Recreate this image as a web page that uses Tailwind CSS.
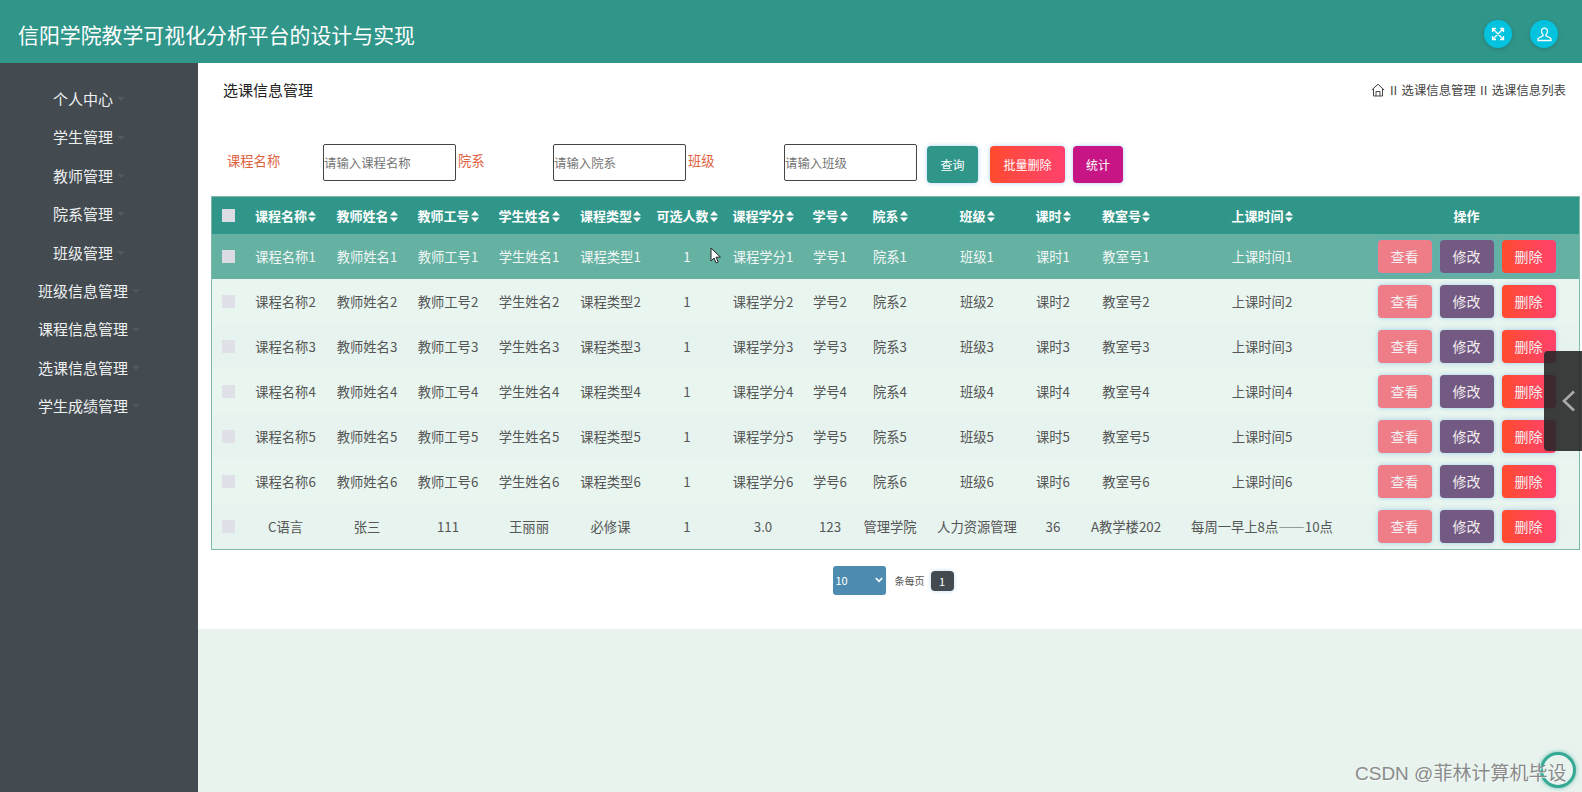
<!DOCTYPE html>
<html lang="zh">
<head>
<meta charset="utf-8">
<title>信阳学院教学可视化分析平台</title>
<script src="https://cdn.jsdelivr.net/npm/@tailwindcss/browser@4"></script>
</head>
<body class="bg-[#e8f3ee]">
<div class="relative w-[1582px] h-[792px] overflow-hidden flex flex-col bg-[#e8f3ee] font-['Noto_Sans_CJK_SC','Noto_Sans',sans-serif]">
  <header class="h-[63px] shrink-0 bg-[#31968a] flex items-center pl-[18px] pr-[24px]">
    <h1 class="text-[20.900px] leading-[28px] text-white mt-[9px] mb-0 flex-1 -translate-y-[2px]">信阳学院教学可视化分析平台的设计与实现</h1>
    <div class="flex gap-[18px] mt-[5px]">
      <button class="w-[28px] h-[28px] rounded-full bg-[#03c3de] shadow-[0_1px_4px_rgba(0,0,0,0.2)] flex items-center justify-center">
        <svg class="w-[14px] h-[14px]" viewBox="0 0 14 14" fill="none" stroke="#fff" stroke-width="1.3"><path d="M2 2l10 10M12 2L2 12M1.5 5V1.5H5M9 1.5h3.5V5M12.5 9v3.5H9M5 12.5H1.5V9"/></svg>
      </button>
      <button class="w-[28px] h-[28px] rounded-full bg-[#03c3de] shadow-[0_1px_4px_rgba(0,0,0,0.2)] flex items-center justify-center">
        <svg class="w-[15px] h-[15px]" viewBox="0 0 15 15" fill="none" stroke="#fff" stroke-width="1.3"><path d="M7.5 1.2c-2 0-3 1.4-3 3.1 0 1.500.7 2.700 1.500 3.400v1.100L1.800 11c-.6.300-.8.800-.8 1.300V13.500h13v-1.200c0-.5-.2-1-.8-1.300L9 8.800V7.700c.8-.7 1.500-1.900 1.500-3.400 0-1.700-1-3.100-3-3.100z"/></svg>
      </button>
    </div>
  </header>
  <div class="flex flex-1 min-h-0">
    <aside class="w-[198px] shrink-0 bg-[#434a50] pt-[17px] pr-[20px] text-[15px] leading-[38.4px] text-[#eef0f0]">
      <div class="flex items-center justify-center gap-[4px]"><span>个人中心</span><i class="w-0 h-0 border-x-[4px] border-x-transparent border-t-[4px] border-t-[#52585e]"></i></div>
      <div class="flex items-center justify-center gap-[4px]"><span>学生管理</span><i class="w-0 h-0 border-x-[4px] border-x-transparent border-t-[4px] border-t-[#52585e]"></i></div>
      <div class="flex items-center justify-center gap-[4px]"><span>教师管理</span><i class="w-0 h-0 border-x-[4px] border-x-transparent border-t-[4px] border-t-[#52585e]"></i></div>
      <div class="flex items-center justify-center gap-[4px]"><span>院系管理</span><i class="w-0 h-0 border-x-[4px] border-x-transparent border-t-[4px] border-t-[#52585e]"></i></div>
      <div class="flex items-center justify-center gap-[4px]"><span>班级管理</span><i class="w-0 h-0 border-x-[4px] border-x-transparent border-t-[4px] border-t-[#52585e]"></i></div>
      <div class="flex items-center justify-center gap-[4px]"><span>班级信息管理</span><i class="w-0 h-0 border-x-[4px] border-x-transparent border-t-[4px] border-t-[#52585e]"></i></div>
      <div class="flex items-center justify-center gap-[4px]"><span>课程信息管理</span><i class="w-0 h-0 border-x-[4px] border-x-transparent border-t-[4px] border-t-[#52585e]"></i></div>
      <div class="flex items-center justify-center gap-[4px]"><span>选课信息管理</span><i class="w-0 h-0 border-x-[4px] border-x-transparent border-t-[4px] border-t-[#52585e]"></i></div>
      <div class="flex items-center justify-center gap-[4px]"><span>学生成绩管理</span><i class="w-0 h-0 border-x-[4px] border-x-transparent border-t-[4px] border-t-[#52585e]"></i></div>
    </aside>
    <main class="flex-1 min-w-0">
      <div class="bg-white h-[566px] pt-[14px]">
        <div class="flex items-center justify-between h-[26px] pl-[25px] pr-[16px]">
          <span class="text-[15px] text-[#222]">选课信息管理</span>
          <div class="flex items-center text-[12.400px] text-[#444] [word-spacing:1.5px]">
            <svg class="w-[14px] h-[14px] mr-[5px]" viewBox="0 0 14 14" fill="none" stroke="#444" stroke-width="1"><path d="M.8 7L7 1.200 13.200 7M2.500 5.800V13h9V5.800M5 13V8.500h4V13"/></svg>
            <span>II 选课信息管理 II 选课信息列表</span>
          </div>
        </div>
        <form class="flex items-start h-[52px] mt-[41px] pl-[29px]">
          <label class="w-[96px] h-[36px] text-[13.300px] leading-[33px] text-[#e0623f]">课程名称</label>
          <input class="w-[133px] h-[37px] border border-[#444] rounded-[2px] bg-white px-0 text-[12.400px] placeholder:text-[#757575]" placeholder="请输入课程名称">
          <label class="w-[95px] h-[36px] ml-[2px] text-[13.300px] leading-[33px] text-[#e0623f]">院系</label>
          <input class="w-[133px] h-[37px] border border-[#444] rounded-[2px] bg-white px-0 text-[12.400px] placeholder:text-[#757575]" placeholder="请输入院系">
          <label class="w-[96px] h-[36px] ml-[2px] text-[13.300px] leading-[33px] text-[#e0623f]">班级</label>
          <input class="w-[133px] h-[37px] border border-[#444] rounded-[2px] bg-white px-0 text-[12.400px] placeholder:text-[#757575]" placeholder="请输入班级">
          <button type="button" class="w-[51px] h-[37px] ml-[10px] mt-[2px] rounded-[4px] bg-[#31968a] text-white text-[12px] shadow-[0_0_4px_rgba(90,170,230,0.5)]">查询</button>
          <button type="button" class="w-[75px] h-[37px] ml-[12px] mt-[2px] rounded-[4px] bg-gradient-to-r from-[#ff4b2b] to-[#ff416c] text-white text-[12px] shadow-[0_0_4px_rgba(90,170,230,0.5)]">批量删除</button>
          <button type="button" class="w-[50px] h-[37px] ml-[8px] mt-[2px] rounded-[4px] bg-[#c71585] text-white text-[12px] shadow-[0_0_4px_rgba(90,170,230,0.5)]">统计</button>
        </form>
        <div class="ml-[13px] w-[1369px] border border-[#7fb9ae]">
          <table class="table-fixed w-[1367px] border-collapse text-[13.300px] [&_td]:p-0 [&_td]:text-center [&_td]:whitespace-nowrap [&_th]:p-0 [&_th]:whitespace-nowrap [&_tbody_tr]:h-[45px] [&_tbody_tr:nth-child(even)]:bg-[#e9f6f0] [&_tbody_tr:nth-child(odd)]:bg-[#e6f3ee] text-[#555]">
            <colgroup>
              <col class="w-[33px]"><col class="w-[81px]"><col class="w-[82px]"><col class="w-[80px]"><col class="w-[82px]"><col class="w-[81px]"><col class="w-[72px]"><col class="w-[80px]"><col class="w-[54px]"><col class="w-[66px]"><col class="w-[108px]"><col class="w-[44px]"><col class="w-[102px]"><col class="w-[170px]"><col class="w-[232px]">
            </colgroup>
            <thead class="bg-[#31968a] text-white">
              <tr class="h-[37px] text-[13px] [&_th>svg]:inline-block [&_th>svg]:w-[8px] [&_th>svg]:h-[11px] [&_th>svg]:ml-[1px] [&_th>svg]:align-[-1px]">
                <th><span class="block w-[13px] h-[13px] bg-[#dcdde4] ml-[10px]"></span></th>
                <th>课程名称<svg viewBox="0 0 8 11" fill="#fff"><path d="M4 0l4 4.500H0zM0 6.500h8L4 11z"/></svg></th>
                <th>教师姓名<svg viewBox="0 0 8 11" fill="#fff"><path d="M4 0l4 4.500H0zM0 6.500h8L4 11z"/></svg></th>
                <th>教师工号<svg viewBox="0 0 8 11" fill="#fff"><path d="M4 0l4 4.500H0zM0 6.500h8L4 11z"/></svg></th>
                <th>学生姓名<svg viewBox="0 0 8 11" fill="#fff"><path d="M4 0l4 4.500H0zM0 6.500h8L4 11z"/></svg></th>
                <th>课程类型<svg viewBox="0 0 8 11" fill="#fff"><path d="M4 0l4 4.500H0zM0 6.500h8L4 11z"/></svg></th>
                <th>可选人数<svg viewBox="0 0 8 11" fill="#fff"><path d="M4 0l4 4.500H0zM0 6.500h8L4 11z"/></svg></th>
                <th>课程学分<svg viewBox="0 0 8 11" fill="#fff"><path d="M4 0l4 4.500H0zM0 6.500h8L4 11z"/></svg></th>
                <th>学号<svg viewBox="0 0 8 11" fill="#fff"><path d="M4 0l4 4.500H0zM0 6.500h8L4 11z"/></svg></th>
                <th>院系<svg viewBox="0 0 8 11" fill="#fff"><path d="M4 0l4 4.500H0zM0 6.500h8L4 11z"/></svg></th>
                <th>班级<svg viewBox="0 0 8 11" fill="#fff"><path d="M4 0l4 4.500H0zM0 6.500h8L4 11z"/></svg></th>
                <th>课时<svg viewBox="0 0 8 11" fill="#fff"><path d="M4 0l4 4.500H0zM0 6.500h8L4 11z"/></svg></th>
                <th>教室号<svg viewBox="0 0 8 11" fill="#fff"><path d="M4 0l4 4.500H0zM0 6.500h8L4 11z"/></svg></th>
                <th>上课时间<svg viewBox="0 0 8 11" fill="#fff"><path d="M4 0l4 4.500H0zM0 6.500h8L4 11z"/></svg></th>
                <th class="!pl-[7px]">操作</th>
              </tr>
            </thead>
            <tbody class="[&_.acts]:flex [&_.acts]:justify-center [&_.acts]:gap-[8px] [&_.acts]:pl-[7px] [&_.acts>button]:w-[54px] [&_.acts>button]:h-[33px] [&_.acts>button]:rounded-[4px] [&_.acts>button]:text-[14px] [&_.acts>button]:text-[#f4eef0] [&_.acts>button]:shadow-[0_0_4px_rgba(90,170,230,0.5)] [&_.ck]:block [&_.ck]:w-[13px] [&_.ck]:h-[13px] [&_.ck]:ml-[10px] [&_.ck]:bg-[#dfe0e8]">
              <tr class="!bg-[#65b2a3] !text-[#f2f7f6]"><td><span class="ck !bg-[#dcdde4]"></span></td><td>课程名称1</td><td>教师姓名1</td><td>教师工号1</td><td>学生姓名1</td><td>课程类型1</td><td>1</td><td>课程学分1</td><td>学号1</td><td>院系1</td><td>班级1</td><td>课时1</td><td>教室号1</td><td>上课时间1</td><td><div class="acts"><button class="bg-[#ee7d88]">查看</button><button class="bg-[#735a82]">修改</button><button class="bg-gradient-to-r from-[#ff4b2b] to-[#ff416c]">删除</button></div></td></tr>
              <tr><td><span class="ck"></span></td><td>课程名称2</td><td>教师姓名2</td><td>教师工号2</td><td>学生姓名2</td><td>课程类型2</td><td>1</td><td>课程学分2</td><td>学号2</td><td>院系2</td><td>班级2</td><td>课时2</td><td>教室号2</td><td>上课时间2</td><td><div class="acts"><button class="bg-[#ee7d88]">查看</button><button class="bg-[#735a82]">修改</button><button class="bg-gradient-to-r from-[#ff4b2b] to-[#ff416c]">删除</button></div></td></tr>
              <tr><td><span class="ck"></span></td><td>课程名称3</td><td>教师姓名3</td><td>教师工号3</td><td>学生姓名3</td><td>课程类型3</td><td>1</td><td>课程学分3</td><td>学号3</td><td>院系3</td><td>班级3</td><td>课时3</td><td>教室号3</td><td>上课时间3</td><td><div class="acts"><button class="bg-[#ee7d88]">查看</button><button class="bg-[#735a82]">修改</button><button class="bg-gradient-to-r from-[#ff4b2b] to-[#ff416c]">删除</button></div></td></tr>
              <tr><td><span class="ck"></span></td><td>课程名称4</td><td>教师姓名4</td><td>教师工号4</td><td>学生姓名4</td><td>课程类型4</td><td>1</td><td>课程学分4</td><td>学号4</td><td>院系4</td><td>班级4</td><td>课时4</td><td>教室号4</td><td>上课时间4</td><td><div class="acts"><button class="bg-[#ee7d88]">查看</button><button class="bg-[#735a82]">修改</button><button class="bg-gradient-to-r from-[#ff4b2b] to-[#ff416c]">删除</button></div></td></tr>
              <tr><td><span class="ck"></span></td><td>课程名称5</td><td>教师姓名5</td><td>教师工号5</td><td>学生姓名5</td><td>课程类型5</td><td>1</td><td>课程学分5</td><td>学号5</td><td>院系5</td><td>班级5</td><td>课时5</td><td>教室号5</td><td>上课时间5</td><td><div class="acts"><button class="bg-[#ee7d88]">查看</button><button class="bg-[#735a82]">修改</button><button class="bg-gradient-to-r from-[#ff4b2b] to-[#ff416c]">删除</button></div></td></tr>
              <tr><td><span class="ck"></span></td><td>课程名称6</td><td>教师姓名6</td><td>教师工号6</td><td>学生姓名6</td><td>课程类型6</td><td>1</td><td>课程学分6</td><td>学号6</td><td>院系6</td><td>班级6</td><td>课时6</td><td>教室号6</td><td>上课时间6</td><td><div class="acts"><button class="bg-[#ee7d88]">查看</button><button class="bg-[#735a82]">修改</button><button class="bg-gradient-to-r from-[#ff4b2b] to-[#ff416c]">删除</button></div></td></tr>
              <tr><td><span class="ck"></span></td><td>C语言</td><td>张三</td><td>111</td><td>王丽丽</td><td>必修课</td><td>1</td><td>3.0</td><td>123</td><td>管理学院</td><td>人力资源管理</td><td>36</td><td>A教学楼202</td><td>每周一早上8点——10点</td><td><div class="acts"><button class="bg-[#ee7d88]">查看</button><button class="bg-[#735a82]">修改</button><button class="bg-gradient-to-r from-[#ff4b2b] to-[#ff416c]">删除</button></div></td></tr>
            </tbody>
          </table>
        </div>
        <div class="flex items-center justify-center h-[29px] mt-[16px]">
          <div class="relative w-[53px] h-[29px] ml-[6px]">
            <select class="appearance-none w-full h-full rounded-[3px] bg-[#4d8cb0] text-white text-[11px] pl-[3px]"><option>10</option></select>
            <svg class="absolute right-[3px] top-[11px] w-[8px] h-[6px]" viewBox="0 0 8 6" fill="none" stroke="#fff" stroke-width="1.6"><path d="M.8 1l3.200 3.400L7.200 1"/></svg>
          </div>
          <span class="ml-[9px] text-[10px] text-[#555]">条每页</span>
          <span class="ml-[6px] w-[23px] h-[20px] rounded-[4px] bg-[#434a50] text-white text-[11px] leading-[20px] text-center shadow-[0_0_4px_rgba(90,170,230,0.4)]">1</span>
        </div>
      </div>
    </main>
  </div>

  <div class="absolute right-0 top-[351px] w-[38px] h-[100px] rounded-l-[4px] bg-[#282828]/90 flex items-center justify-end pr-[6px]">
    <svg class="w-[14px] h-[22px]" viewBox="0 0 14 22" fill="none" stroke="#a9a9a9" stroke-width="2.600"><path d="M12 1.500L2 11l10 9.500"/></svg>
  </div>
  <svg class="absolute left-[710px] top-[247px] w-[12px] h-[17px]" viewBox="0 0 12 17"><path d="M1 1v13l3-3 2.200 5 2-1-2.200-4.800H10.500z" fill="#fff" stroke="#222" stroke-width="1"/></svg>
  <div class="absolute left-[1540px] top-[752px] w-[36px] h-[36px] rounded-full border-[3px] border-[#35a994] shadow-[0_0_4px_rgba(53,169,148,0.7)] bg-[#e8f3ee]"></div>
  <div class="absolute left-[1355px] top-[761px] text-[19px] leading-[26px] text-[#8a8a8a] whitespace-nowrap [text-shadow:1px_1px_1px_rgba(255,255,255,0.7)] font-['Liberation_Sans','Noto_Sans_CJK_SC',sans-serif]">CSDN @菲林计算机毕设</div>
</div>
</body>
</html>
